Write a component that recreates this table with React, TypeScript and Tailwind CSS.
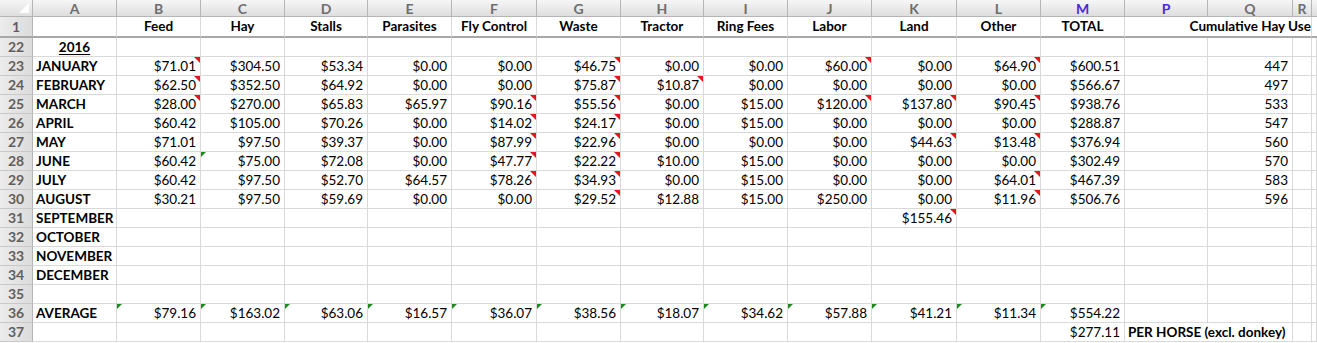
import React from "react";

const letters = ["A", "B", "C", "D", "E", "F", "G", "H", "I", "J", "K", "L", "M", "P", "Q", "R"];
const heads = ["Feed", "Hay", "Stalls", "Parasites", "Fly Control", "Waste", "Tractor", "Ring Fees", "Labor", "Land", "Other", "TOTAL"];

// r suffix = red comment marker, g prefix = green error marker
const months: [string, string[], string][] = [
  ["JANUARY", ["71.01r", "304.50", "53.34", "0.00", "0.00", "46.75r", "0.00", "0.00", "60.00r", "0.00", "64.90r", "600.51"], "447"],
  ["FEBRUARY", ["62.50r", "352.50", "64.92", "0.00", "0.00", "75.87r", "10.87r", "0.00", "0.00", "0.00", "0.00", "566.67"], "497"],
  ["MARCH", ["28.00r", "270.00", "65.83", "65.97", "90.16r", "55.56r", "0.00", "15.00", "120.00r", "137.80r", "90.45r", "938.76"], "533"],
  ["APRIL", ["60.42", "105.00", "70.26", "0.00", "14.02r", "24.17r", "0.00", "15.00", "0.00", "0.00", "0.00", "288.87"], "547"],
  ["MAY", ["71.01", "97.50", "39.37", "0.00", "87.99r", "22.96r", "0.00", "0.00", "0.00", "44.63r", "13.48r", "376.94"], "560"],
  ["JUNE", ["60.42", "g75.00", "72.08", "0.00", "47.77r", "22.22r", "10.00", "15.00", "0.00", "0.00", "0.00", "302.49"], "570"],
  ["JULY", ["60.42", "97.50", "52.70", "64.57", "78.26r", "34.93r", "0.00", "15.00", "0.00", "0.00", "64.01r", "467.39"], "583"],
  ["AUGUST", ["30.21", "97.50", "59.69", "0.00", "0.00", "29.52r", "12.88", "15.00", "250.00", "0.00", "11.96r", "506.76"], "596"],
];

const avg = ["79.16", "163.02", "63.06", "16.57", "36.07", "38.56", "18.07", "34.62", "57.88", "41.21", "11.34", "554.22"];

const cell = "border-r border-b border-[#d9d9d9] h-[19px] leading-[18px] overflow-hidden whitespace-nowrap relative";

const RowHead = ({ n, thick }: { n: number | string; thick?: boolean }) => (
  <div
    className={`bg-gradient-to-r from-[#ececec] to-[#dcdcdc] border-r border-[#b5b5b5] text-center text-[#5f5f5f] font-bold text-[14px] ${
      thick ? "h-[21px] leading-[19px] border-b-2 border-b-[#a8a8a8]" : "h-[19px] leading-[18px] border-b border-b-[#c8c8c8]"
    }`}
  >
    {n}
  </div>
);

const Val = ({ v }: { v: string }) => {
  const red = v.endsWith("r");
  const green = v.startsWith("g");
  const t = v.replace(/[rg]/g, "");
  return (
    <div className={`${cell} text-right pr-[4px]`}>
      {t && "$" + t}
      {red && <span className="absolute top-0 right-0 w-0 h-0 border-t-[6px] border-t-[#e8141c] border-l-[6px] border-l-transparent" />}
      {green && <span className="absolute top-0 left-0 w-0 h-0 border-t-[5px] border-t-[#1d8a1d] border-r-[5px] border-r-transparent" />}
    </div>
  );
};

const Green = ({ v }: { v: string }) => (
  <div className={`${cell} text-right pr-[4px]`}>
    {"$" + v}
    <span className="absolute top-0 left-0 w-0 h-0 border-t-[5px] border-t-[#1d8a1d] border-r-[5px] border-r-transparent" />
  </div>
);

const Empty = ({ n }: { n: number }) => (
  <>
    {Array.from({ length: n }).map((_, i) => (
      <div key={i} className={cell} />
    ))}
  </>
);

const App = () => {
  return (
    <div className="w-[1317px] h-[343px] bg-white overflow-hidden font-['Lato',sans-serif] text-[13.5px] text-black">
      <div className="grid grid-cols-[33px_84px_84px_84px_83px_84px_85px_84px_83px_84px_84px_85px_84px_84px_83px_85px_19px_5px]">
        {/* column letters */}
        <div className="h-[17px] bg-gradient-to-b from-[#f6f6f6] to-[#dedede] border-r border-b border-[#b5b5b5] relative">
          <span className="absolute right-[3px] bottom-[3px] w-0 h-0 border-b-[10px] border-b-white border-l-[10px] border-l-transparent" />
        </div>
        {letters.map((l) => (
          <div
            key={l}
            className={`h-[17px] leading-[17px] bg-gradient-to-b from-[#f6f6f6] to-[#dedede] border-r border-b border-[#b5b5b5] text-center font-bold text-[14px] ${
              l === "M" || l === "P" ? "text-[#4a2bd6]" : "text-[#6e6e6e]"
            }`}
          >
            {l}
          </div>
        ))}
        <div className="h-[17px] bg-gradient-to-b from-[#f6f6f6] to-[#dedede] border-b border-[#b5b5b5]" />

        {/* row 1 */}
        <RowHead n={1} thick />
        <div className="h-[21px] border-r border-[#d9d9d9] border-b-2 border-b-[#a8a8a8]" />
        {heads.map((h) => (
          <div key={h} className="h-[21px] leading-[19px] border-r border-[#d9d9d9] border-b-2 border-b-[#a8a8a8] text-center font-bold whitespace-nowrap">
            {h}
          </div>
        ))}
        <div className="col-span-3 h-[21px] leading-[19px] border-r border-[#d9d9d9] border-b-2 border-b-[#a8a8a8] text-right pr-0 font-bold whitespace-nowrap">
          Cumulative Hay Use
        </div>
        <div className="h-[21px] border-b-2 border-b-[#a8a8a8]" />

        {/* row 22 */}
        <RowHead n={22} />
        <div className={`${cell} text-center font-bold underline underline-offset-2`}>2016</div>
        <Empty n={16} />

        {months.map(([m, vals, q], i) => (
          <React.Fragment key={m}>
            <RowHead n={23 + i} />
            <div className={`${cell} font-bold pl-[3px]`}>{m}</div>
            {vals.map((v, j) => (
              <Val key={j} v={v} />
            ))}
            <div className={cell} />
            <div className={`${cell} text-right pr-[4px]`}>{q}</div>
            <Empty n={2} />
          </React.Fragment>
        ))}

        {/* row 31 */}
        <RowHead n={31} />
        <div className={`${cell} font-bold pl-[3px]`}>SEPTEMBER</div>
        <Empty n={9} />
        <Val v="155.46r" />
        <Empty n={6} />

        {["OCTOBER", "NOVEMBER", "DECEMBER", ""].map((m, i) => (
          <React.Fragment key={i}>
            <RowHead n={32 + i} />
            <div className={`${cell} font-bold pl-[3px]`}>{m}</div>
            <Empty n={16} />
          </React.Fragment>
        ))}

        {/* row 36 */}
        <RowHead n={36} />
        <div className={`${cell} font-bold pl-[3px]`}>AVERAGE</div>
        {avg.map((v, j) => (
          <Green key={j} v={v} />
        ))}
        <Empty n={4} />

        {/* row 37 */}
        <RowHead n={37} />
        <Empty n={12} />
        <Val v="277.11" />
        <div className={`${cell} col-span-2 font-bold pl-[3px]`}>PER HORSE (excl. donkey)</div>
        <Empty n={2} />
      </div>
    </div>
  );
};

export default App;
